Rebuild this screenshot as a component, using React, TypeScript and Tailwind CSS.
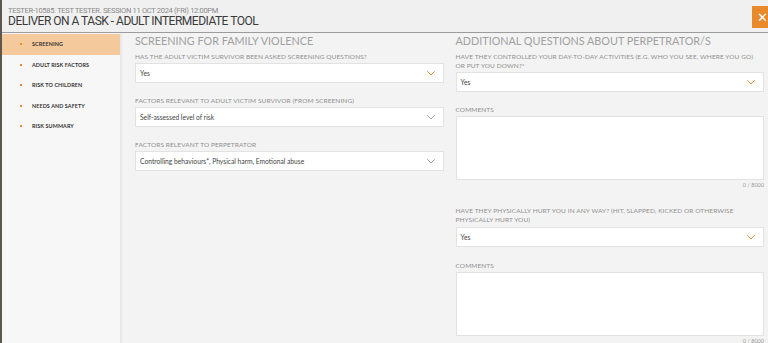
import type { ReactNode } from 'react'

const navItems = ['Screening', 'Adult risk factors', 'Risk to children', 'Needs and safety', 'Risk summary']

function Chevron({ accent }: { accent?: boolean }) {
  return (
    <svg width="10" height="6" viewBox="0 0 10 6" fill="none" className="shrink-0">
      <path
        d="M1.5 1.5l3.5 3.5 3.5-3.5"
        stroke={accent ? '#e8892a' : '#a0a0a0'}
        strokeWidth="0.9"
        strokeLinecap="round"
        strokeLinejoin="round"
      />
    </svg>
  )
}

function Label({ children, className = 'mb-[2px]' }: { children: ReactNode; className?: string }) {
  return (
    <p className={`${className} text-[6.5px] uppercase leading-[9px] tracking-[0.1px] text-[#909090]`}>
      {children}
    </p>
  )
}

function Select({ value, accent }: { value: string; accent?: boolean }) {
  return (
    <div className="flex h-[20px] items-center justify-between border border-[#e2e2e2] bg-white pl-[4px] pr-[7px]">
      <span className="text-[6.7px] text-[#444]">{value}</span>
      <Chevron accent={accent} />
    </div>
  )
}

function Comments() {
  return (
    <div>
      <Label>Comments</Label>
      <div className="h-[64px] border border-[#e2e2e2] bg-white" />
      <p className="text-right text-[5.5px] leading-[10px] text-[#9a9a9a]">0 / 8000</p>
    </div>
  )
}

export default function App() {
  return (
    <div className="h-[343px] w-[768px] overflow-hidden bg-[#5e5750] font-['Lato',sans-serif]">
      <div className="ml-[2px] flex h-full flex-col bg-[#f3f3f3]">
        <header className="flex h-[33px] shrink-0 items-start justify-between border-b border-[#9c9c9c] bg-[#f0f0f0] pl-[6px]">
          <div className="pt-[7px] font-['Roboto',sans-serif]">
            <p className="text-[7.5px] uppercase leading-[8px] tracking-[-0.3px] text-[#8a8a8a]">
              Tester-10585. Test Tester. Session 11 Oct 2024 (Fri) 12:00PM
            </p>
            <h1 className="text-[12px] uppercase leading-[12px] tracking-[-0.5px] text-[#3a3a3a]">
              Deliver on a task - Adult intermediate tool
            </h1>
          </div>
          <button className="mr-[-4px] mt-[6px] flex h-[22px] w-[20px] items-center justify-center bg-[#e8892a] text-[13px] leading-none text-white">
            ✕
          </button>
        </header>

        <div className="flex min-h-0 flex-1">
          <nav className="w-[120px] shrink-0 border-r-2 border-[#e8e8e8] bg-[#f7f7f7] pt-[1px]">
            {navItems.map((item, i) => (
              <div
                key={item}
                className={`flex h-[20.5px] items-center pl-[18px] ${i === 0 ? 'bg-[#f4c99b]' : ''}`}
              >
                <span className="mr-[10px] h-[2px] w-[2px] bg-[#e8892a]" />
                <span className="text-[5.4px] font-bold uppercase tracking-[0.1px] text-[#333]">{item}</span>
              </div>
            ))}
          </nav>

          <main className="grid flex-1 grid-cols-2 gap-[12px] pl-[13px] pr-[4px] pt-[1px]">
            <section>
              <h2 className="mb-[4px] text-[10.8px] uppercase leading-[14px] text-[#a0a0a0]">
                Screening for family violence
              </h2>
              <Label>Has the adult victim survivor been asked screening questions?</Label>
              <Select value="Yes" accent />
              <div className="mt-[13px]">
                <Label>Factors relevant to adult victim survivor (from screening)</Label>
                <Select value="Self-assessed level of risk" />
              </div>
              <div className="mt-[13px]">
                <Label>Factors relevant to perpetrator</Label>
                <Select value="Controlling behaviours*, Physical harm, Emotional abuse" />
              </div>
            </section>

            <section>
              <h2 className="mb-[4px] text-[10.8px] uppercase leading-[14px] text-[#a0a0a0]">
                Additional questions about perpetrator/s
              </h2>
              <Label>
                Have they controlled your day-to-day activities (e.g. who you see, where you go) or put you
                down?*
              </Label>
              <Select value="Yes" accent />
              <div className="mt-[13px]">
                <Comments />
              </div>
              <div className="mt-[16px]">
                <Label className="mb-[3px]">
                  Have they physically hurt you in any way? (Hit, slapped, kicked or otherwise physically hurt you)
                </Label>
                <Select value="Yes" accent />
              </div>
              <div className="mt-[14px]">
                <Comments />
              </div>
            </section>
          </main>
        </div>
      </div>
    </div>
  )
}
